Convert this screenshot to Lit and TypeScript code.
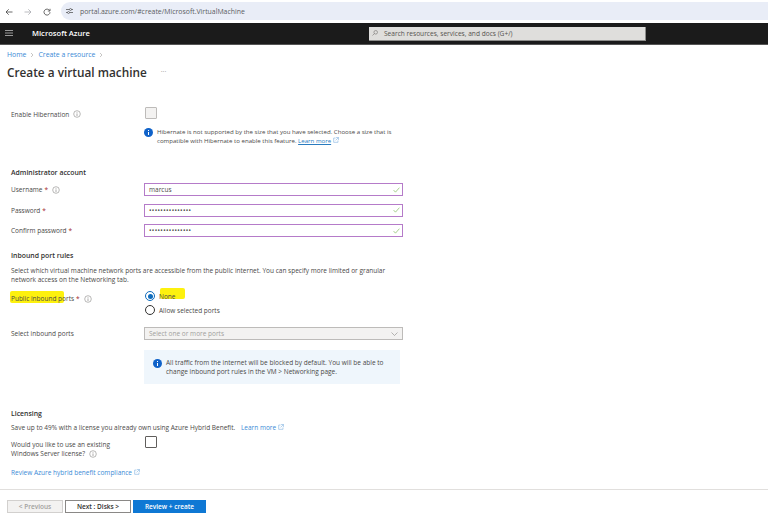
import { LitElement, html, css, svg } from "lit";
import { customElement } from "lit/decorators.js";

const infoSmall = html`<svg class="i" viewBox="0 0 8 8" width="8" height="8"><circle cx="4" cy="4" r="3.3" fill="none" stroke="#8a8886" stroke-width=".6"/><path d="M4 3.4V6M4 2v.7" stroke="#8a8886" stroke-width=".7"/></svg>`;
const ext = html`<svg class="ext" viewBox="0 0 7 7" width="6" height="6"><path d="M3 1.2H.8v5h5V4M3.6.6h2.8v2.8M6.2.8 3 4" fill="none" stroke="#6aa5dc" stroke-width=".6"/></svg>`;
const check = html`<svg class="chk" viewBox="0 0 8 7" width="7" height="6"><path d="M.6 3.6 2.8 6 7.4.8" fill="none" stroke="#8cc26d" stroke-width=".9"/></svg>`;
const infoBlue = html`<svg class="ib" viewBox="0 0 9 9" width="9" height="9"><circle cx="4.5" cy="4.5" r="4.5" fill="#0f62c9"/><path d="M4.5 4v3M4.5 2v1" stroke="#fff" stroke-width="1"/></svg>`;
const chev = svg`<path d="M1 1l2 2-2 2" fill="none" stroke="#a19f9d" stroke-width=".6"/>`;

@customElement("app-root")
export class AppRoot extends LitElement {
  static styles = css`
    :host { display: block; width: 768px; height: 519px; overflow: hidden; background: #fff; font-family: "Open Sans", "Noto Sans", sans-serif; font-size: 6.5px; color: #4a4947; line-height: 9px; white-space: nowrap; position: relative; }
    .chrome { height: 23px; display: flex; align-items: flex-start; padding-top: 2px; box-sizing: border-box; }
    .nav { width: 61px; height: 19px; display: flex; align-items: center; gap: 11px; padding-left: 5px; box-sizing: border-box; flex: none; }
    .url { flex: 1; height: 18px; background: #e9edf7; border-radius: 9px 0 0 9px; display: flex; align-items: center; gap: 7px; padding-left: 5px; font-size: 6.9px; color: #5a5c62; }
    .top { height: 22px; background: #1b1b1b; display: flex; align-items: center; box-sizing: border-box; border-bottom: 1px solid #555; color: #fff; }
    .burger { width: 32px; padding-left: 5px; box-sizing: border-box; flex: none; }
    .brand { font-weight: 600; font-size: 7.6px; width: 337px; flex: none; }
    .search { width: 277px; height: 14px; background: #dfdedc; display: flex; align-items: center; color: #55534f; font-size: 6.6px; gap: 6px; padding-left: 3px; box-sizing: border-box; border: 1px solid #8d8d8b; border-width: 0 1px 1px 0; }
    .crumbs { margin: 5px 0 0 7px; height: 9px; color: #4b9be0; display: flex; align-items: center; gap: 4px; font-size: 6.9px; }
    h1 { margin: 5px 0 0 7px; font-size: 11.8px; line-height: 17px; font-weight: 600; color: #323130; display: flex; align-items: center; }
    .dots { margin-left: 14px; font-size: 7px; color: #8a8886; font-weight: 400; position: relative; top: -1px; }
    .form { padding-left: 11px; width: 392px; }
    .row { display: grid; grid-template-columns: 133px 259px; align-items: center; }
    .lab { display: flex; align-items: center; gap: 2px; position: relative; }
    .req { color: #a4262c; }
    .i { margin-left: 2px; flex: none; vertical-align: -1.5px; }
    .cb { width: 10px; height: 10px; border: 1px solid #bdbbb9; background: #f3f2f1; border-radius: 1px; }
    .cb.up { margin: -2px 0 0 1px; }
    .cb.on { background: #fff; border-color: #605e5c; margin-left: 1px; }
    .note { display: flex; gap: 4px; font-size: 6.1px; }
    .ib { flex: none; margin-top: 1px; }
    .ext { vertical-align: 0; }
    .h { font-weight: 600; color: #323130; font-size: 6.9px; height: 9px; }
    .inp { height: 13px; border: 1px solid #b57bc9; box-sizing: border-box; display: flex; align-items: center; justify-content: space-between; padding: 0 2px 0 4px; font-size: 6.5px; }
    .pw { font-size: 6.6px; letter-spacing: .35px; }
    .rad { width: 10px; height: 10px; border-radius: 50%; border: 1px solid #323130; box-sizing: border-box; flex: none; display: flex; align-items: center; justify-content: center; }
    .rad.on { border-color: #0f6cbd; }
    .rad.on::after { content: ""; width: 5px; height: 5px; background: #0f6cbd; border-radius: 50%; }
    .opt { display: flex; align-items: center; gap: 4px; position: relative; height: 10px; padding-left: 1px; }
    .mark { background: #fdf10e; position: absolute; border-radius: 2px; z-index: 0; }
    .m1 { left: -1px; top: -3px; width: 54px; height: 12px; }
    .m2 { left: 16px; top: -3px; width: 25px; height: 11px; }
    .t { position: relative; z-index: 1; }
    .sel { height: 13px; background: #f3f2f1; border: 1px solid #bdbbb9; box-sizing: border-box; color: #a19f9d; padding: 0 4px; display: flex; align-items: center; justify-content: space-between; }
    .box { width: 256px; height: 34px; background: #eff6fc; box-sizing: border-box; padding: 8px 9px; display: flex; gap: 4px; }
    a { color: #3a8ad6; text-decoration: none; }
    .u { text-decoration: underline; color: #2a7bbf; }
    .foot { position: absolute; left: 0; top: 489px; width: 768px; border-top: 1px solid #e1dfdd; padding: 10px 0 0 7px; display: flex; gap: 2px; box-sizing: border-box; font-weight: 600; }
    .btn { height: 13px; display: flex; align-items: center; justify-content: center; box-sizing: border-box; border: 1px solid #8a8886; color: #323130; }
    .b1 { width: 56px; background: #f3f2f1; color: #a19f9d; border-color: #d2d0ce; }
    .b2 { width: 66px; background: #fff; }
    .b3 { width: 73px; background: #0f78d4; border-color: #0f78d4; color: #fff; }
    .m-28 { margin-top: 28px; } .m-8 { margin-top: 8px; } .m-7 { margin-top: 7px; } .m-23 { margin-top: 23px; } .m-6 { margin-top: 6px; }
    .m-r { margin-top: 7.7px; } .m-14 { margin-top: 14px; } .m-12 { margin-top: 12px; } .m-10 { margin-top: 10px; }
    .m-25 { margin-top: 25px; } .m-5 { margin-top: 5px; } .m-4 { margin-top: 4px; }
    .start { align-items: start; }
    .lab.pub { margin-top: 3px; }
    .save { margin-top: 5px; }
    .gapl { margin-left: 4px; }
  `;
  render() {
    return html`
      <div class="chrome">
        <div class="nav">
          <svg width="8" height="8" viewBox="0 0 8 8"><path d="M7.5 4H1M3.7 1.3 1 4l2.7 2.7" fill="none" stroke="#444" stroke-width=".8"/></svg>
          <svg width="8" height="8" viewBox="0 0 8 8"><path d="M.5 4H7M4.3 1.3 7 4 4.3 6.7" fill="none" stroke="#a9abb0" stroke-width=".8"/></svg>
          <svg width="8" height="8" viewBox="0 0 8 8"><path d="M6.6 2.6A3 3 0 1 0 7 4.2M7 .8v2.2H4.8" fill="none" stroke="#444" stroke-width=".8"/></svg>
        </div>
        <div class="url">
          <svg width="7" height="6" viewBox="0 0 7 6"><path d="M0 1.5h3.5M5.5 1.5H7M0 4.5h1.5M3.5 4.5H7" stroke="#444" stroke-width=".7"/><circle cx="4.5" cy="1.5" r="1" fill="none" stroke="#444" stroke-width=".6"/><circle cx="2.5" cy="4.5" r="1" fill="none" stroke="#444" stroke-width=".6"/></svg>
          <span>portal.azure.com/#create/Microsoft.VirtualMachine</span>
        </div>
      </div>
      <div class="top">
        <div class="burger"><svg width="8" height="6" viewBox="0 0 8 6"><path d="M0 .5h8M0 3h8M0 5.5h8" stroke="#cfcfcf" stroke-width=".7"/></svg></div>
        <div class="brand">Microsoft Azure</div>
        <div class="search">
          <svg width="6" height="6" viewBox="0 0 6 6"><circle cx="3.7" cy="2.3" r="1.8" fill="none" stroke="#605e5c" stroke-width=".5"/><path d="M2.4 3.6.5 5.5" stroke="#605e5c" stroke-width=".5"/></svg>
          <span>Search resources, services, and docs (G+/)</span>
        </div>
      </div>
      <div class="crumbs">
        <a>Home</a><svg width="4" height="6" viewBox="0 0 4 6">${chev}</svg><a>Create a resource</a><svg width="4" height="6" viewBox="0 0 4 6">${chev}</svg>
      </div>
      <h1>Create a virtual machine <span class="dots">···</span></h1>
      <div class="form">
        <div class="row m-28"><div class="lab">Enable Hibernation ${infoSmall}</div><div class="cb up"></div></div>
        <div class="row m-8"><div></div><div class="note">${infoBlue}<div>Hibernate is not supported by the size that you have selected. Choose a size that is<br>compatible with Hibernate to enable this feature. <a class="u">Learn more</a> ${ext}</div></div></div>
        <div class="h m-23">Administrator account</div>
        <div class="row m-6"><div class="lab">Username <span class="req">*</span>${infoSmall}</div><div class="inp"><span>marcus</span>${check}</div></div>
        <div class="row m-r"><div class="lab">Password <span class="req">*</span></div><div class="inp"><span class="pw">•••••••••••••••</span>${check}</div></div>
        <div class="row m-r"><div class="lab">Confirm password <span class="req">*</span></div><div class="inp"><span class="pw">•••••••••••••••</span>${check}</div></div>
        <div class="h m-14">Inbound port rules</div>
        <div class="m-6">Select which virtual machine network ports are accessible from the public internet. You can specify more limited or granular<br>network access on the Networking tab.</div>
        <div class="row m-7 start">
          <div class="lab pub"><span class="mark m1"></span><span class="t">Public inbound ports</span> <span class="req t">*</span>${infoSmall}</div>
          <div>
            <div class="opt"><span class="mark m2"></span><span class="rad on"></span><span class="t">None</span></div>
            <div class="opt m-4"><span class="rad"></span><span class="t">Allow selected ports</span></div>
          </div>
        </div>
        <div class="row m-12"><div class="lab">Select inbound ports</div>
          <div class="sel"><span>Select one or more ports</span><svg width="7" height="4" viewBox="0 0 7 4"><path d="M.5.5l3 3 3-3" fill="none" stroke="#8a8886" stroke-width=".6"/></svg></div></div>
        <div class="row m-10"><div></div><div class="box">${infoBlue}<div>All traffic from the internet will be blocked by default. You will be able to<br>change inbound port rules in the VM &gt; Networking page.</div></div></div>
        <div class="h m-25">Licensing</div>
        <div class="save">Save up to 49% with a license you already own using Azure Hybrid Benefit. <a class="gapl">Learn more</a> ${ext}</div>
        <div class="row m-4 start"><div><div class="m-4">Would you like to use an existing<br>Windows Server license? ${infoSmall}</div></div><div class="cb on"></div></div>
        <div class="m-10"><a>Review Azure hybrid benefit compliance</a> ${ext}</div>
      </div>
      <div class="foot">
        <div class="btn b1">&lt; Previous</div>
        <div class="btn b2">Next : Disks &gt;</div>
        <div class="btn b3">Review + create</div>
      </div>
    `;
  }
}
